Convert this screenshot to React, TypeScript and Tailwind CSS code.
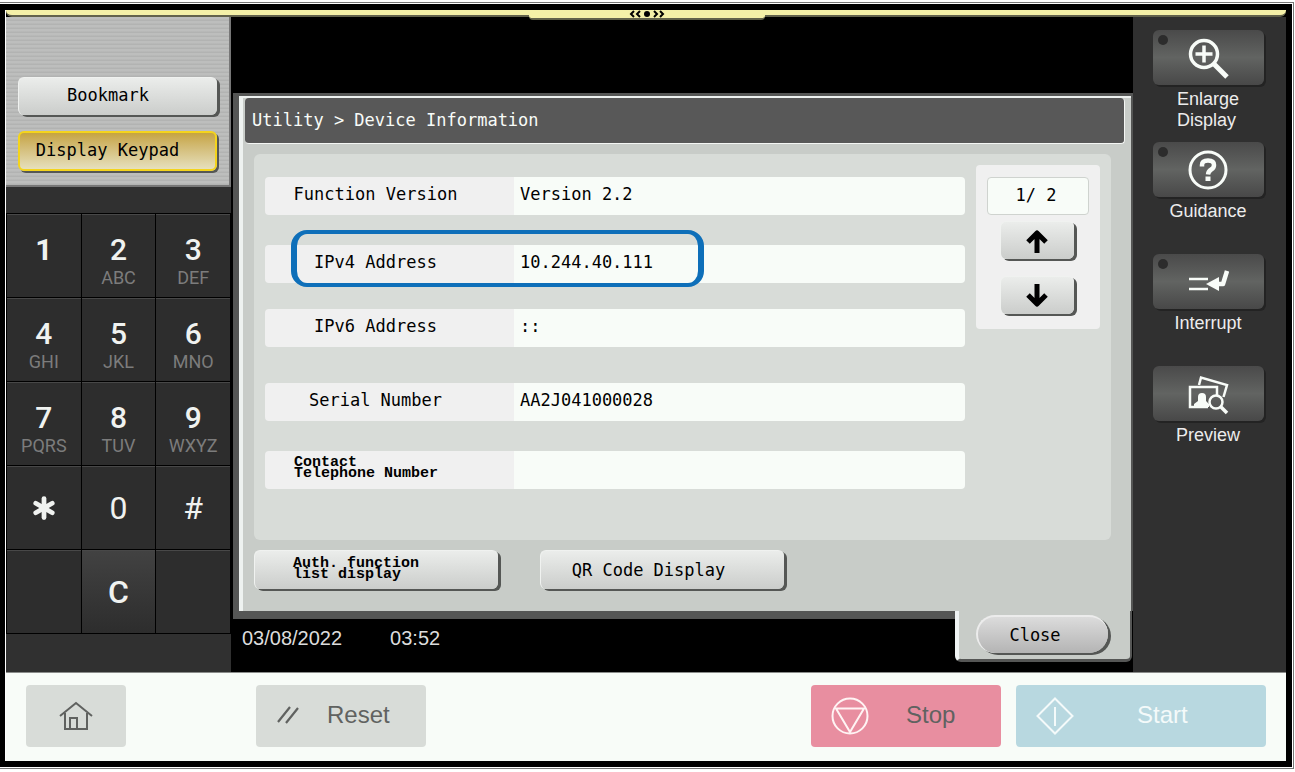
/**
 * @file App.tsx
 * @description Copier touch panel: device information screen with hard keys around it.
 */

import type { ReactNode } from 'react'
import { Asterisk } from 'lucide-react'
import clsx from 'clsx'

const MONO = "font-['DejaVu_Sans_Mono',monospace] text-[17px] leading-5"
const MONO_SMALL = "font-['Liberation_Mono',monospace] text-[15px] leading-[11px] font-bold"

const bevel =
  'rounded-md border-t border-l border-[#f0f2f0] bg-linear-to-b from-[#ebedeb] to-[#cbcdcb] text-black shadow-[3px_2px_0_#555755]'

interface Row {
  label: string
  value: string
  gap: string
  highlighted?: boolean
}

const rows: Row[] = [
  { label: 'Function Version', value: 'Version 2.2', gap: '' },
  { label: 'IPv4 Address', value: '10.244.40.111', gap: 'mt-[30px]', highlighted: true },
  { label: 'IPv6 Address', value: '::', gap: 'mt-[26px]' },
  { label: 'Serial Number', value: 'AA2J041000028', gap: 'mt-9' },
  { label: 'Contact\nTelephone Number', value: '', gap: 'mt-[30px]' },
]

const keys = [
  { main: '1', sub: '' },
  { main: '2', sub: 'ABC' },
  { main: '3', sub: 'DEF' },
  { main: '4', sub: 'GHI' },
  { main: '5', sub: 'JKL' },
  { main: '6', sub: 'MNO' },
  { main: '7', sub: 'PQRS' },
  { main: '8', sub: 'TUV' },
  { main: '9', sub: 'WXYZ' },
]

function DigitKey({ main, sub }: { main: string; sub: string }) {
  return (
    <button
      type="button"
      className="flex flex-col items-center border-t border-[#484848] bg-[#2d2d2d] pt-[21px]"
    >
      <span
        className={clsx(
          'text-[30px] leading-7 text-[#f0f2f0]',
          main === '1' ? 'font-bold' : 'font-medium',
        )}
      >
        {main}
      </span>
      <span className="text-[18px] leading-7 text-[#7c7c7c]">{sub}</span>
    </button>
  )
}

function WideKey({ children, lit }: { children?: ReactNode; lit?: boolean }) {
  return (
    <button
      type="button"
      className={clsx(
        'flex items-center justify-center border-t border-[#484848] text-[32px] text-[#f0f2f0]',
        lit ? 'bg-linear-to-b from-[#424242] to-[#2d2d2d] font-medium' : 'bg-[#2d2d2d]',
      )}
    >
      {children}
    </button>
  )
}

function SideKey({ label, lamp = true, children }: { label: string; lamp?: boolean; children: ReactNode }) {
  return (
    <div className="flex flex-col items-center">
      <button
        type="button"
        aria-label={label.replace('\n', ' ')}
        className="relative flex h-[55px] w-[111px] items-center justify-center rounded-md bg-linear-to-b from-[#4a4a4a] via-[#626462] to-[#484848] text-[#f8fcf8] shadow-[2px_2px_0_#232323]"
      >
        {lamp && <span className="absolute top-[5px] left-[5px] size-[10px] rounded-full bg-[#2c2c2c]" />}
        {children}
      </button>
      <span className="mt-1 text-[18px] leading-[21px] whitespace-pre text-[#ececec]">{label}</span>
    </div>
  )
}

function LeftColumn() {
  return (
    <aside className="flex w-[225px] shrink-0 flex-col bg-[#303030]">
      <div className="flex h-[170px] flex-col gap-4 border-r-2 border-b-2 border-[#777] bg-[repeating-linear-gradient(to_bottom,#bdbebd_0px,#bdbebd_2px,#b2b3b2_3px,#b2b3b2_4px)] pt-[60px] pr-3 pl-3">
        <button type="button" className={clsx(bevel, MONO, 'h-[38px] pr-5 pb-1')}>
          Bookmark
        </button>
        <button
          type="button"
          className={clsx(
            MONO,
            'h-[40px] rounded-md border-2 border-[#f4d41c] bg-linear-to-b from-[#c6a440] to-[#e6e0bc] pr-5 pb-[2px] text-black shadow-[2px_2px_0_#555755]',
          )}
        >
          Display Keypad
        </button>
      </div>
      <div className="mt-[26px] grid auto-rows-[83px] grid-cols-3 gap-px bg-black p-px font-['Roboto',sans-serif]">
        {keys.map((key) => (
          <DigitKey key={key.main} {...key} />
        ))}
        <WideKey>
          <Asterisk size={38} strokeWidth={3} aria-label="*" />
        </WideKey>
        <WideKey>0</WideKey>
        <WideKey>#</WideKey>
        <WideKey />
        <WideKey lit>C</WideKey>
        <WideKey />
      </div>
    </aside>
  )
}

function InfoRow({ label, value, gap, highlighted }: Row) {
  const twoLines = label.includes('\n')
  return (
    <div className={clsx('relative flex h-[38px] items-stretch', gap)}>
      <dt
        className={clsx(
          'flex w-[249px] shrink-0 items-center rounded-l-sm bg-[#f0f0f0] whitespace-pre',
          twoLines ? clsx(MONO_SMALL, 'pb-1 pl-[29px]') : clsx(MONO, 'justify-center pr-7 pb-1'),
        )}
      >
        {label}
      </dt>
      <dd className={clsx(MONO, 'flex flex-1 items-center rounded-r-sm bg-[#f8fcf8] pb-1 pl-[6px]')}>{value}</dd>
      {highlighted && (
        <span className="pointer-events-none absolute -top-[15px] left-[26px] h-[57px] w-[413px] rounded-[16px] border-x-[6px] border-y-4 border-[#0e6fb9]" />
      )}
    </div>
  )
}

function PageArrow({ label, d }: { label: string; d: string }) {
  return (
    <button type="button" aria-label={label} className={clsx(bevel, 'flex h-[38px] w-[74px] items-center justify-center')}>
      <svg width="24" height="26" viewBox="0 0 24 26" fill="none" stroke="currentColor" strokeWidth="5" strokeLinejoin="round">
        <path d={d} />
      </svg>
    </button>
  )
}

function Screen() {
  return (
    <main className="flex min-w-0 flex-1 flex-col bg-black pt-[76px] pb-[10px] pl-[2px]">
      <section className="border-t-[3px] border-r-2 border-l-[6px] border-[#555655]">
        <div className="border-t-2 border-l-4 border-[#eef2f0] bg-[#c8ccc8] pb-[22px]">
          <h1
            className={clsx(
              MONO,
              'mr-[6px] ml-[2px] flex h-[46px] items-center rounded-sm border-r border-b border-[#f4f6f4] bg-[#585858] pb-[2px] pl-[7px] text-[#f8fcf8]',
            )}
          >
            Utility &gt; Device Information
          </h1>

          <div className="mt-[10px] mr-5 ml-[11px] flex h-[386px] items-start gap-[11px] rounded-md bg-[#d8dcd8] px-[11px]">
            <dl className="flex-1 pt-[23px]">
              {rows.map((row) => (
                <InfoRow key={row.label} {...row} />
              ))}
            </dl>

            {/* Pager */}
            <div className="mt-[11px] flex h-[164px] w-[124px] flex-col items-center rounded-sm bg-[#f0f0f0] pt-3">
              <output
                className="flex h-[38px] w-[102px] items-center justify-center rounded-sm border border-[#cfd3cf] bg-[#f8fcf8] pr-1 font-['DejaVu_Sans_Mono',monospace] text-[17px]"
              >
                1/ 2
              </output>
              <div className="mt-[6px] flex flex-col gap-[17px] pr-[3px]">
                <PageArrow label="Previous page" d="M12 25V4M3 14l9-9 9 9" />
                <PageArrow label="Next page" d="M12 1v21M3 12l9 9 9-9" />
              </div>
            </div>
          </div>

          <div className="mt-[10px] ml-[11px] flex gap-[42px]">
            <button type="button" className={clsx(bevel, MONO_SMALL, 'h-[39px] w-[244px] pb-[2px] pl-[38px] text-left whitespace-pre')}>
              {'Auth. function\nlist display'}
            </button>
            <button type="button" className={clsx(bevel, MONO, 'h-[39px] w-[244px] pr-7')}>
              QR Code Display
            </button>
          </div>
        </div>
      </section>

      <div className="flex">
        <div className="flex flex-1 items-start gap-12 border-t-8 border-[#555655] pt-2 pl-[9px] text-[20px] leading-[22px] text-[#dcdcdc]">
          <time>03/08/2022</time>
          <time>03:52</time>
        </div>
        <div className="mr-px h-[51px] w-[177px] rounded-b-md border-r-2 border-b-[3px] border-l-4 border-r-[#555655] border-b-[#555655] border-l-[#f0f4f4] bg-[#c8ccc8] pt-1 pl-[17px]">
          <button
            type="button"
            className={clsx(
              MONO,
              'h-[38px] w-[132px] rounded-full border-t-2 border-l-2 border-[#ececec] bg-linear-to-b from-[#dcdcdc] to-[#b4b4b4] pr-4 text-black shadow-[3px_2px_0_#555755]',
            )}
          >
            Close
          </button>
        </div>
      </div>
    </main>
  )
}

function RightColumn() {
  return (
    <aside className="grid w-[153px] shrink-0 auto-rows-[112px] content-start bg-[#303030] pt-[13px] pr-[3px]">
      <SideKey label={'Enlarge\nDisplay'}>
        <svg width="42" height="42" viewBox="0 0 42 42" fill="none" stroke="currentColor">
          <circle cx="17" cy="17" r="13.5" strokeWidth="3.5" />
          <path d="M8.500 17h17M17 8.500v17" strokeWidth="3.5" />
          <path d="M27 27l13 13" strokeWidth="5" />
        </svg>
      </SideKey>
      <SideKey label="Guidance">
        <svg width="42" height="42" viewBox="0 0 42 42" fill="none" stroke="currentColor">
          <circle cx="21" cy="21" r="18" strokeWidth="3" />
          <path d="M15 17.500v-1.500q0-4.500 6-4.500t6 4.500q0 2.800-2.800 4.500T21 25.500" strokeWidth="4.500" />
          <path d="M18.500 27.500h5v4.500h-5z" fill="currentColor" stroke="none" />
        </svg>
      </SideKey>
      <SideKey label="Interrupt">
        <svg width="42" height="42" viewBox="0 0 42 42" fill="none" stroke="currentColor">
          <path d="M2 18h19M2 28h19" strokeWidth="2.500" />
          <path d="M19 23l13-7v14z" fill="currentColor" stroke="none" />
          <path d="M30 23h6L40 10" strokeWidth="4.500" strokeLinejoin="round" />
        </svg>
      </SideKey>
      <SideKey label="Preview" lamp={false}>
        <svg width="42" height="42" viewBox="0 0 42 42" fill="none" stroke="currentColor">
          <path d="M12 12l2-7.500 26 7.500-3.500 12" strokeWidth="2.500" />
          <path d="M21 34H3V14h27v9" strokeWidth="2.500" />
          <path d="M7 34v-3l4-3v-4q0-4 4-4t4 4v4l3 3v3z" fill="currentColor" stroke="none" />
          <circle cx="29" cy="29" r="6.500" strokeWidth="2.500" />
          <path d="M34 34l6 6" strokeWidth="3.500" />
        </svg>
      </SideKey>
    </aside>
  )
}

function BottomBar() {
  return (
    <footer className="flex h-[89px] items-start border-t border-[#8a8c8a] bg-[#f8fcf8] px-5 pt-3 text-[24px] text-[#606260]">
      <button type="button" aria-label="Home" className="flex h-[62px] w-[100px] items-center justify-center rounded-sm bg-[#d8dcd8]">
        <svg width="34" height="30" viewBox="0 0 34 30" fill="none" stroke="currentColor" strokeWidth="2">
          <path d="M1 15L17 2l16 13" />
          <path d="M6 12v16h22V12M11 28V17h7v11" />
        </svg>
      </button>
      <button type="button" className="ml-[130px] flex h-[62px] w-[170px] items-center gap-7 rounded-sm bg-[#d8dcd8] pb-[2px] pl-[21px]">
        <svg width="22" height="18" viewBox="0 0 22 18" fill="none" stroke="currentColor" strokeWidth="2.200">
          <path d="M1 16L13 1M9 17L21 2" />
        </svg>
        Reset
      </button>
      <button type="button" className="ml-auto flex h-[62px] w-[190px] items-center rounded-sm bg-[#e88ea0] pb-[2px] pl-5">
        <svg className="mt-[2px] mr-[37px] text-[#fff4f4]" width="38" height="38" viewBox="0 0 38 38" fill="none" stroke="currentColor" strokeWidth="2">
          <circle cx="19" cy="19" r="17.500" />
          <path d="M5 11.500h28L19 35z" />
        </svg>
        Stop
      </button>
      <button type="button" className="ml-[15px] flex h-[62px] w-[250px] items-center rounded-sm bg-[#b8d8e0] pb-[2px] pl-5 text-[#f4fafa]">
        <svg className="mt-[2px] mr-[63px]" width="38" height="38" viewBox="0 0 38 38" fill="none" stroke="currentColor" strokeWidth="2">
          <path d="M19 1.500L36.500 19 19 36.500 1.500 19zM19 10v19" />
        </svg>
        Start
      </button>
    </footer>
  )
}

export default function App() {
  return (
    <div className="bg-white pt-[2px] pr-px pb-[3px] font-['Liberation_Sans',Arial,sans-serif]">
      <div className="border-y border-r border-[#777] py-px pr-px">
        <div className="border-y-[6px] border-r-[6px] border-l-[5px] border-black bg-white pl-px">
          <div className="relative bg-black">
            <div className="h-[7px] rounded-b-md border-b-2 border-[#62624c] bg-[#f4f0a8]" />
            {/* Pull-down handle on the message strip */}
            <div className="absolute top-0 left-[523px] flex h-[10px] w-[236px] justify-center rounded-b-sm border-b-2 border-[#62624c] bg-[#f4f0a8]">
              <svg width="36" height="8" viewBox="0 0 36 8" fill="none" stroke="#000" strokeWidth="2">
                <path d="M5 1L2 4l3 3M11 1L8 4l3 3M25 1l3 3-3 3M31 1l3 3-3 3" />
                <circle cx="18" cy="4" r="3" fill="#000" stroke="none" />
              </svg>
            </div>
          </div>
          <div className="flex">
            <LeftColumn />
            <Screen />
            <RightColumn />
          </div>
          <BottomBar />
        </div>
      </div>
    </div>
  )
}
